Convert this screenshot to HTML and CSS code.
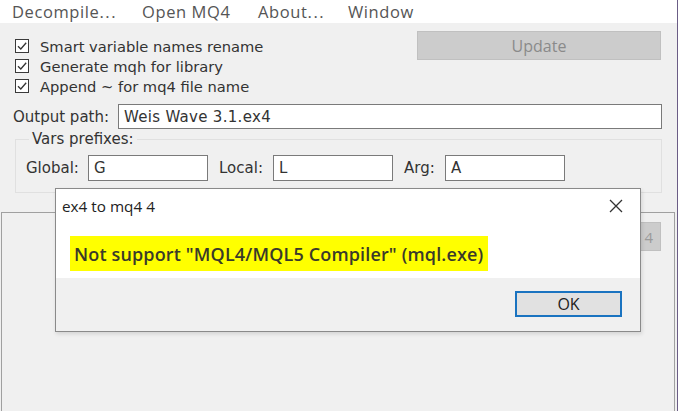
FILE: index.html
```html
<!DOCTYPE html>
<html>
<head>
<meta charset="utf-8">
<link rel="stylesheet" href="styles.css">
</head>
<body>
<div class="window">
  <div class="menubar">
    <span class="menu-item">Decompile<span class="dots">...</span></span>
    <span class="menu-item">Open MQ4</span>
    <span class="menu-item">About<span class="dots">...</span></span>
    <span class="menu-item">Window</span>
  </div>
  <div class="main">
    <div class="options">
      <div class="checks">
        <div class="check"><span class="box"><svg viewBox="0 0 14 14" width="14" height="14"><path d="M3 7.2 L5.8 10 L11.2 3.8" fill="none" stroke="#333" stroke-width="1.3"/></svg></span><span>Smart variable names rename</span></div>
        <div class="check"><span class="box"><svg viewBox="0 0 14 14" width="14" height="14"><path d="M3 7.2 L5.8 10 L11.2 3.8" fill="none" stroke="#333" stroke-width="1.3"/></svg></span><span>Generate mqh for library</span></div>
        <div class="check"><span class="box"><svg viewBox="0 0 14 14" width="14" height="14"><path d="M3 7.2 L5.8 10 L11.2 3.8" fill="none" stroke="#333" stroke-width="1.3"/></svg></span><span>Append ~ for mq4 file name</span></div>
      </div>
      <div class="update">Update</div>
    </div>
    <div class="path-row">
      <span class="path-label">Output path:</span>
      <div class="field path-field">Weis Wave 3.1.ex4</div>
    </div>
    <fieldset class="prefixes">
      <legend>Vars prefixes:</legend>
      <div class="prefix-row">
        <span class="pl pl-global">Global:</span><div class="field small">G</div>
        <span class="pl pl-local">Local:</span><div class="field small">L</div>
        <span class="pl pl-arg">Arg:</span><div class="field small">A</div>
      </div>
    </fieldset>
    <div class="lower">
      <div class="convert">Convert to mq4</div>
    </div>
  </div>

  <div class="dialog">
    <div class="dlg-title">
      <span>ex4 to mq4 4</span>
      <svg class="close" viewBox="0 0 14 14" width="14" height="14"><path d="M1 1 L13 13 M13 1 L1 13" stroke="#333" stroke-width="1.3"/></svg>
    </div>
    <div class="dlg-body">
      <div class="msg">Not support "MQL4/MQL5 Compiler" (mql.exe)</div>
    </div>
    <div class="dlg-footer">
      <div class="ok">OK</div>
    </div>
  </div>
</div>
</body>
</html>
```

FILE: styles.css
```css
* { box-sizing: border-box; }
html, body { margin: 0; padding: 0; }
body {
  width: 680px;
  height: 411px;
  background: #ffffff;
  overflow: hidden;
  font-family: "DejaVu Sans", "Liberation Sans", sans-serif;
  color: #2b2b2b;
}
.window {
  position: relative;
  width: 678px;
  height: 411px;
  border-right: 1px solid #6b5d86;
  background: #f0f0f0;
  display: flex;
  flex-direction: column;
}
.menubar {
  height: 23px;
  background: #ffffff;
  display: grid;
  grid-template-columns: 130px 116px 90px auto;
  padding-left: 12px;
  align-items: center;
  font-family: "Open Sans", sans-serif;
  font-size: 16.5px;
  letter-spacing: 0.6px;
  color: #555555;
}
.dots { letter-spacing: 1.6px; }
.main {
  flex: 1;
  display: flex;
  flex-direction: column;
}
.options {
  display: flex;
  padding: 8px 16px 0 15px;
}
.checks {
  flex: 1;
  padding-top: 5px;
}
.check {
  height: 20px;
  display: flex;
  align-items: center;
  font-size: 14.7px;
  color: #333333;
}
.box {
  width: 14px;
  height: 14px;
  border: 1px solid #3a3a3a;
  background: #ffffff;
  margin-right: 11px;
  display: flex;
}
.box svg { display: block; margin: -1px; }
.update {
  width: 244px;
  height: 29px;
  background: #cccccc;
  border: 1px solid #c0c0c0;
  color: #8a8a8a;
  font-family: "Open Sans", sans-serif;
  font-size: 16px;
  display: flex;
  align-items: center;
  justify-content: center;
}
.path-row {
  margin-top: 8px;
  display: flex;
  align-items: center;
  padding: 0 15px 0 13px;
  font-size: 15px;
  color: #333333;
}
.path-label { width: 105px; }
.field {
  height: 25px;
  background: #ffffff;
  border: 1px solid #7a7a7a;
  display: flex;
  align-items: center;
  padding-left: 5px;
  font-size: 15px;
  letter-spacing: 0.3px;
  color: #333333;
}
.path-field { flex: 1; }
.prefixes {
  margin: 1px 15px 0 15px;
  padding: 7px 10px 11px 10px;
  border: 1px solid #e0e0e0;
  min-width: 0;
}
.prefixes legend {
  margin-left: 3px;
  padding: 0 3px;
  font-size: 15px;
  line-height: 18px;
  color: #333333;
}
.prefix-row {
  display: flex;
  align-items: center;
  font-size: 15px;
  color: #333333;
}
.pl { display: block; }
.pl-global { width: 62px; }
.pl-local { width: 54px; }
.pl-arg { width: 41px; }
.small {
  width: 120px;
  height: 26px;
  margin-right: 11px;
}
.lower {
  flex: 1;
  margin: 19px 2px 0 1px;
  border: 1px solid #a0a0a0;
  border-bottom: none;
  display: flex;
  justify-content: flex-end;
  align-items: flex-start;
  padding: 9px 13px 0 0;
}
.convert {
  width: 170px;
  height: 29px;
  background: #cccccc;
  border: 1px solid #c0c0c0;
  color: #9a9a9a;
  font-family: "Open Sans", sans-serif;
  font-size: 15px;
  letter-spacing: 4px;
  white-space: nowrap;
  display: flex;
  align-items: center;
  justify-content: flex-end;
  padding-right: 3px;
}
.dialog {
  position: absolute;
  left: 55px;
  top: 188px;
  width: 586px;
  height: 144px;
  border: 1px solid #8a8a8a;
  background: #ffffff;
  display: flex;
  flex-direction: column;
  box-shadow: 1px 2px 4px rgba(0,0,0,0.12);
}
.dlg-title {
  height: 33px;
  display: flex;
  align-items: center;
  justify-content: space-between;
  padding: 0 17px 0 6px;
  font-family: "Open Sans", sans-serif;
  font-size: 15.3px;
  color: #222222;
}
.close { display: block; }
.dlg-body {
  height: 56px;
  padding: 14px 0 0 14px;
}
.msg {
  width: 418px;
  height: 35px;
  background: #ffff00;
  display: flex;
  align-items: center;
  padding-left: 4px;
  font-family: "Open Sans", sans-serif;
  font-weight: 600;
  font-size: 18px;
  letter-spacing: 0.15px;
  color: #3a3a2a;
}
.dlg-footer {
  flex: 1;
  background: #f0f0f0;
  display: flex;
  justify-content: flex-end;
  align-items: flex-start;
  padding: 13px 18px 0 0;
}
.ok {
  width: 107px;
  height: 26px;
  border: 2px solid #1a73c0;
  background: #e1e1e1;
  display: flex;
  align-items: center;
  justify-content: center;
  font-family: "Open Sans", sans-serif;
  font-size: 16px;
  color: #222222;
}
```
